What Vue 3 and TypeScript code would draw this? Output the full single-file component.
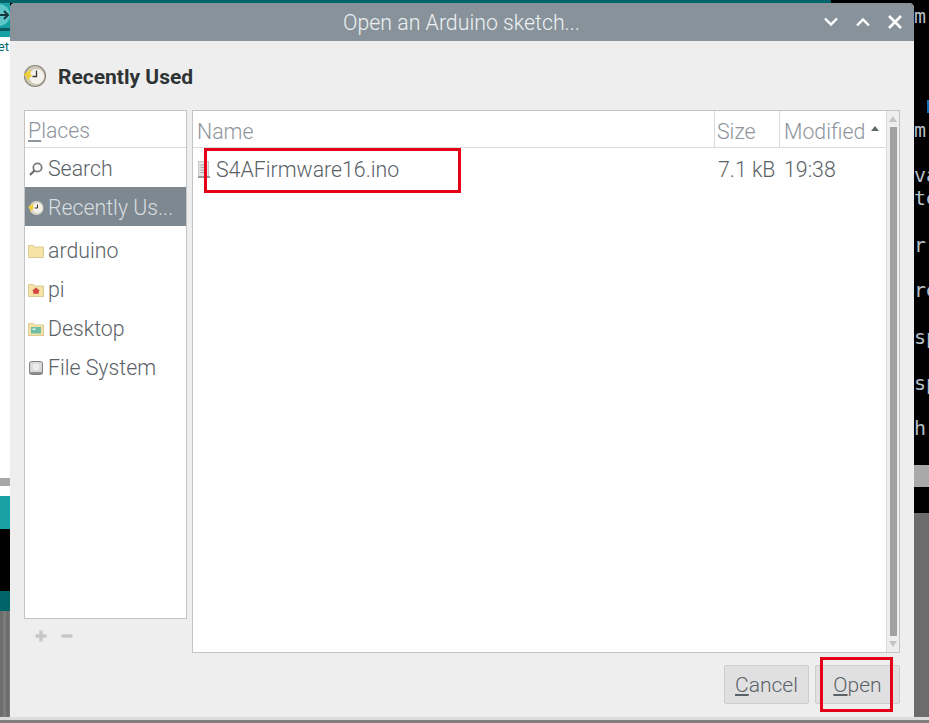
<script setup lang="ts">
const rightLetters = [
  { text: 'm', top: 6 }, { text: 'm', top: 120 }, { text: 'va', top: 165 }, { text: 'te', top: 188 },
  { text: 'r', top: 235 }, { text: 're', top: 280 }, { text: 'sp', top: 327 }, { text: 'sp', top: 373 }, { text: 'h', top: 418 },
]
</script>

<template>
  <div class="desktop">
    <div class="topline"></div>
    <div class="win-left">
      <div class="wl-teal"><span class="wl-btn">
        <svg width="10" height="12" viewBox="0 0 10 12"><path d="M0 6h8M4 2l4 4-4 4" fill="none" stroke="#17383a" stroke-width="2"/></svg>
      </span></div>
      <div class="wl-stripe"></div>
      <div class="wl-teal2"></div>
      <div class="wl-white"><span class="wl-et">et</span></div>
      <div class="wl-gray"></div>
      <div class="wl-white2"></div>
      <div class="wl-teal3"></div>
      <div class="wl-black"></div>
      <div class="wl-dark"></div>
      <div class="wl-stripes"></div>
    </div>
    <div class="win-right">
      <span v-for="l in rightLetters" :key="l.top" class="term" :style="{ top: l.top + 'px' }">{{ l.text }}</span>
      <span class="term-blue"></span>
      <div class="wr-gray"></div>
      <div class="wr-dark"></div>
    </div>
    <div class="bottomline"></div>

    <div class="dialog">
      <header class="titlebar">
        <span class="title">Open an Arduino sketch...</span>
        <div class="controls">
          <svg width="16" height="12" viewBox="0 0 16 12"><path d="M2 2.500l6 6 6-6" fill="none" stroke="#fff" stroke-width="2.400"/></svg>
          <svg width="16" height="12" viewBox="0 0 16 12"><path d="M2 9.500l6-6 6 6" fill="none" stroke="#fff" stroke-width="2.400"/></svg>
          <svg width="16" height="16" viewBox="0 0 16 16"><path d="M2 2l12 12M14 2L2 14" fill="none" stroke="#fff" stroke-width="2.600"/></svg>
        </div>
      </header>

      <div class="location">
        <svg class="clock" width="24" height="24" viewBox="0 0 24 24">
          <circle cx="12" cy="12" r="10.500" fill="#cfc9ba" stroke="#8a8578" stroke-width="1.200"/>
          <circle cx="13.500" cy="12.500" r="7.500" fill="#f4f2ec"/>
          <path d="M1.500 9.500l7-4-1.500 5 2.500.3-5.500 6-.2-5-2.500.5z" fill="#efcf36"/>
          <path d="M13.500 6.500v6h-4" fill="none" stroke="#3c3a36" stroke-width="1.300"/>
        </svg>
        <span class="location-text">Recently Used</span>
      </div>

      <div class="panes">
        <aside class="sidebar">
          <div class="places-head"><u>P</u>laces</div>
          <div class="side-row nudged">
            <svg class="side-icon" width="16" height="16" viewBox="0 0 16 16"><circle cx="9.500" cy="6.500" r="4.200" fill="#fff" stroke="#7b7b7b" stroke-width="1.800"/><path d="M6.500 9.500L2 14" stroke="#6a6a6a" stroke-width="2.200"/></svg>
            <span>Search</span>
          </div>
          <div class="side-row nudged active">
            <svg class="side-icon" width="16" height="16" viewBox="0 0 16 16"><circle cx="8.500" cy="8" r="7" fill="#d8d4c8"/><circle cx="9.500" cy="8" r="5" fill="#f3f1ea"/><path d="M.5 6.500l5-3-1 3.500 2 .3-4 4.700-.2-3.800-1.800.3z" fill="#efcf36"/><path d="M9.500 4.500V8H7" fill="none" stroke="#333" stroke-width="1"/></svg>
            <span>Recently Us...</span>
          </div>
          <div class="side-sep"></div>
          <div class="side-row">
            <svg class="side-icon" width="16" height="14" viewBox="0 0 16 14"><path d="M.5 1.500h5l1 1.500h9v10.500H.5z" fill="#f5e2a4" stroke="#dccb94"/></svg>
            <span>arduino</span>
          </div>
          <div class="side-row">
            <svg class="side-icon" width="16" height="14" viewBox="0 0 16 14"><path d="M.5 1.500h5l1 1.500h9v10.500H.5z" fill="#f5e2a4" stroke="#dccb94"/><path d="M8 4.500l4 3.500h-1.200v2.700H5.200V8H4z" fill="#d2483f"/></svg>
            <span>pi</span>
          </div>
          <div class="side-row">
            <svg class="side-icon" width="16" height="14" viewBox="0 0 16 14"><path d="M.5 1.500h5l1 1.500h9v10.500H.5z" fill="#f5e2a4" stroke="#dccb94"/><rect x="3" y="5" width="10" height="6.500" fill="#6fbda5"/><rect x="4.500" y="6.500" width="3" height="1.500" fill="#dff1ea"/></svg>
            <span>Desktop</span>
          </div>
          <div class="side-row">
            <svg class="side-icon" width="16" height="16" viewBox="0 0 16 16"><rect x="1.500" y="1.500" width="13" height="13" rx="2" fill="#d9d9d9" stroke="#7f7f7f"/><circle cx="8" cy="7" r="3.500" fill="#ececec"/><rect x="2" y="12" width="12" height="2" fill="#8e8e8e"/></svg>
            <span>File System</span>
          </div>
        </aside>

        <section class="files">
          <div class="table">
            <div class="thead">
              <div class="th th-name">Name</div>
              <div class="th th-size">Size</div>
              <div class="th th-mod">Modified<span class="sort"></span></div>
            </div>
            <div class="tr">
              <div class="td td-name">
                <svg width="13" height="18" viewBox="0 0 13 18"><rect x=".5" y=".5" width="10" height="15" fill="#e4e4e4" stroke="#c6c6c6"/><path d="M2.500 4h6M2.500 6.500h6M2.500 9h6M2.500 11.500h6" stroke="#a8a8a8"/><rect x="0" y="15" width="12" height="2" fill="#9a9a9a"/></svg>
                <span>S4AFirmware16.ino</span>
              </div>
              <div class="td td-size">7.1 kB</div>
              <div class="td td-mod">19:38</div>
            </div>
          </div>
          <div class="scrollbar">
            <span class="arrow up"></span>
            <div class="thumb"></div>
            <span class="arrow down"></span>
          </div>
        </section>
      </div>

      <div class="under-side">
        <svg width="14" height="14" viewBox="0 0 14 14"><path d="M7 1.500v11M1.500 7h11" stroke="#c6c6c6" stroke-width="3.400"/></svg>
        <svg width="14" height="14" viewBox="0 0 14 14"><path d="M1.500 7h11" stroke="#c6c6c6" stroke-width="3.400"/></svg>
      </div>

      <div class="actions">
        <button class="btn"><u>C</u>ancel</button>
        <button class="btn"><u>O</u>pen</button>
      </div>

      <div class="mark mark-file"></div>
    </div>
    <div class="mark mark-open"></div>
  </div>
</template>

<style scoped>
.desktop { position: relative; width: 929px; height: 723px; overflow: hidden; background: #000; font-family: Roboto, "Liberation Sans", sans-serif; }
.topline { position: absolute; left: 0; top: 0; width: 831px; height: 3px; background: #006468; }
.win-left { position: absolute; left: 0; top: 3px; width: 10px; height: 714px; display: flex; flex-direction: column; }
.wl-teal { height: 25px; background: #17a1a5; overflow: hidden; position: relative; }
.wl-btn { position: absolute; left: -12px; top: 1px; width: 22px; height: 22px; border-radius: 50%; background: #5cc6c8; display: flex; align-items: center; justify-content: flex-end; }
.wl-stripe { height: 3px; background: #0a5a5e; }
.wl-teal2 { height: 6px; background: #17a1a5; }
.wl-white { height: 441px; background: #fff; position: relative; overflow: hidden; }
.wl-et { position: absolute; right: 1px; top: 2px; font-size: 13px; color: #006468; line-height: 16px; }
.wl-gray { height: 8px; background: #a8a8a8; }
.wl-white2 { height: 10px; background: #fff; }
.wl-teal3 { height: 33px; background: #17a1a5; }
.wl-black { height: 62px; background: #000; }
.wl-dark { height: 20px; background: #006468; }
.wl-stripes { flex: 1; background: repeating-linear-gradient(90deg, #6e6e6e 0 3px, #7c7c7c 3px 6px); }
.win-right { position: absolute; left: 914px; top: 0; width: 15px; height: 717px; background: #000; box-sizing: border-box; }
.term { position: absolute; left: 0; font-size: 20px; line-height: 20px; color: #b5bfc6; font-family: "DejaVu Sans Mono", monospace; white-space: nowrap; }
.term-blue { position: absolute; left: 13px; top: 100px; width: 3px; height: 13px; background: #1a6fb0; }
.wr-gray { position: absolute; left: 0; top: 465px; width: 15px; height: 22px; background: #a9a9a9; }
.wr-dark { position: absolute; left: 0; top: 513px; width: 15px; height: 204px; background: #6c6c6c; }
.bottomline { position: absolute; left: 0; top: 717px; width: 929px; height: 6px; background: linear-gradient(#dcdcdc 0 3px, #7f7f7f 3px 6px); }

.dialog { position: absolute; left: 10px; top: 3px; width: 904px; height: 714px; background: #eeeeee; border-radius: 5px 5px 0 0; overflow: hidden; display: flex; flex-direction: column; }
.titlebar { height: 38px; flex: none; background: #87929a; position: relative; display: flex; align-items: center; justify-content: center; }
.title { font-size: 21.300px; font-weight: 300; color: #eef1f3; line-height: 38px; padding-top: 2px; margin-left: -1px; }
.controls { position: absolute; right: 11px; top: 0; height: 38px; display: flex; align-items: center; gap: 16px; }
.location { height: 69px; flex: none; display: flex; align-items: center; padding-left: 13px; gap: 11px; box-sizing: border-box; }
.location-text { font-size: 21px; font-weight: 700; color: #2e3436; padding-top: 2px; }
.panes { height: 509px; flex: none; display: flex; padding-left: 14px; gap: 5px; align-items: flex-start; }
.sidebar { width: 163px; height: 509px; box-sizing: border-box; background: #fff; border: 1px solid #c4c4c4; flex: none; color: #5a6268; font-size: 21.300px; font-weight: 300; }
.places-head { height: 37px; box-sizing: border-box; line-height: 40px; padding-left: 3px; color: #8e959b; border-bottom: 1px solid #dadada; }
.side-row { height: 39px; box-sizing: border-box; display: flex; align-items: center; padding-left: 3px; gap: 4px; white-space: nowrap; }
.side-row.nudged { padding-top: 2px; }
.side-row.active { background: #7d8890; color: #d9dee1; }
.side-icon { flex: none; }
.side-sep { height: 5px; }
.files { width: 708px; height: 543px; box-sizing: border-box; background: #fff; border: 1px solid #c4c4c4; flex: none; display: flex; }
.table { width: 693px; flex: none; color: #5a6268; font-size: 21.300px; font-weight: 300; }
.thead { height: 37px; box-sizing: border-box; display: flex; border-bottom: 1px solid #dadada; color: #8e959b; }
.th { line-height: 41px; box-sizing: border-box; padding-left: 4px; white-space: nowrap; }
.th-name { width: 521px; }
.th-size { width: 65px; border-left: 1px solid #dadada; padding-left: 2px; }
.th-mod { width: 107px; border-left: 1px solid #dadada; position: relative; }
.sort { position: absolute; right: 7px; top: 15px; width: 0; height: 0; border-left: 4px solid transparent; border-right: 4px solid transparent; border-bottom: 5px solid #5f6569; }
.tr { height: 43px; display: flex; align-items: center; }
.td { box-sizing: border-box; white-space: nowrap; }
.td-name { width: 521px; display: flex; align-items: center; padding-left: 5px; gap: 5px; }
.td-size { width: 65px; padding-left: 4px; }
.td-mod { width: 107px; padding-left: 5px; }
.scrollbar { flex: 1; background: #eeeeee; border-left: 1px solid #dadada; display: flex; flex-direction: column; align-items: center; padding: 5px 0; box-sizing: border-box; gap: 5px; }
.thumb { flex: 1; width: 7px; background: #a2a2a2; }
.arrow { width: 0; height: 0; border-left: 4px solid transparent; border-right: 4px solid transparent; flex: none; }
.arrow.up { border-bottom: 6px solid #c4c4c4; }
.arrow.down { border-top: 6px solid #c4c4c4; }
.under-side { position: absolute; left: 24px; top: 626px; display: flex; gap: 12px; }
.actions { position: absolute; right: 14px; top: 662px; display: flex; gap: 6px; }
.btn { width: 85px; height: 39px; box-sizing: border-box; padding: 0; background: #e0e0e0; border: 1px solid #cdcdcd; border-radius: 2px; font-family: Roboto, "Liberation Sans", sans-serif; font-size: 21px; font-weight: 300; color: #5a6268; }
.mark { position: absolute; box-sizing: border-box; border: 3px solid #e30018; }
.mark-file { left: 194px; top: 145px; width: 257px; height: 45px; }
.mark-open { left: 820px; top: 657px; width: 73px; height: 55px; }
</style>
